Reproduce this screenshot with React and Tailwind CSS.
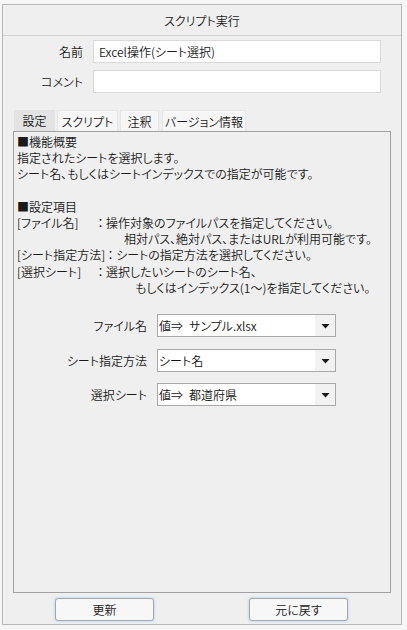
import React from "react";

const font = "font-['Noto_Sans_CJK_JP','Noto_Sans',sans-serif] [font-feature-settings:'palt'] font-[350]";

function Arrow() {
  return (
    <svg width="9" height="6" viewBox="0 0 9 6" className="block">
      <path d="M0.5 1 L8.5 1 L4.5 5.5 Z" fill="#1a1a1a" />
    </svg>
  );
}

function Select({ children, className = "" }) {
  return (
    <div className={"flex h-[23px] w-[179px] border border-[#a9a9a9] bg-white " + className}>
      <div className="flex flex-1 items-center pl-[1px] whitespace-nowrap text-[#111]">{children}</div>
      <div className="flex w-[20px] items-center justify-center bg-[#f2f2f2]">
        <Arrow />
      </div>
    </div>
  );
}

function Row({ label, text, cont }) {
  return (
    <>
      <div className="flex">
        <span className="min-w-[78px] shrink-0 whitespace-nowrap">{label}</span>
        <span className="inline-block w-[11px] shrink-0 text-center">：</span>
        <span className="whitespace-nowrap">{text}</span>
      </div>
      {cont}
    </>
  );
}

export default function App() {
  return (
    <div className={"h-[630px] w-[407px] bg-[#f6f6f6] pl-[2px] pt-[4px] text-[12px] text-[#1a1a1a] " + font}>
      <div className="flex h-[621px] w-[400px] flex-col border border-[#b8b8b8] bg-[#efefef]">
        <div className="flex h-[31px] items-center justify-center border-b border-[#d4d4d4] pt-[2px] text-[12px]">
          スクリプト実行
        </div>

        <div className="mt-[4px] flex items-center">
          <div className="w-[80px] text-right">名前</div>
          <div className="ml-[10px] flex h-[23px] w-[288px] items-center border border-[#d9d9d9] bg-white pl-[5px]">
            Excel操作(シート選択)
          </div>
        </div>
        <div className="mt-[7px] flex items-center">
          <div className="w-[80px] text-right">コメント</div>
          <div className="ml-[10px] h-[23px] w-[288px] border border-[#d9d9d9] bg-white" />
        </div>

        <div className="ml-[11px] mt-[17px] flex h-[21px] items-stretch">
          <div className="flex w-[41px] items-center justify-center bg-[#e3e3e3] pt-[1px]">設定</div>
          <div className="ml-[2px] flex w-[61px] items-center justify-center border border-b-0 border-[#e6e6e6] bg-[#f6f6f6] pt-[1px]">スクリプト</div>
          <div className="ml-[2px] flex w-[39px] items-center justify-center border border-b-0 border-[#e6e6e6] bg-[#f6f6f6] pt-[1px]">注釈</div>
          <div className="ml-[3px] flex w-[84px] items-center justify-center border border-b-0 border-[#e6e6e6] bg-[#f6f6f6] pt-[1px]">バージョン情報</div>
        </div>

        <div className="ml-[10px] h-[462px] w-[378px] border border-[#a0a0a0] bg-[#efefef] pl-[3px] pt-[2px]">
          <div className="leading-[16.2px]">
            <div>■機能概要</div>
            <div>指定されたシートを選択します。</div>
            <div>シート名、もしくはシートインデックスでの指定が可能です。</div>
            <div className="h-[16.2px]" />
            <div>■設定項目</div>
            <Row
              label="[ファイル名]"
              text="操作対象のファイルパスを指定してください。"
              cont={<div className="pl-[107px] whitespace-nowrap">相対パス、絶対パス、またはURLが利用可能です。</div>}
            />
            <Row label="[シート指定方法]" text="シートの指定方法を選択してください。" />
            <Row
              label="[選択シート]"
              text="選択したいシートのシート名、"
              cont={<div className="pl-[118px] whitespace-nowrap">もしくはインデックス(1～)を指定してください。</div>}
            />
          </div>

          <div className="mt-[18px] flex flex-col">
            <div className="flex items-center">
              <div className="w-[130px] text-right">ファイル名</div>
              <Select className="ml-[10px]">値⇒ <span className="ml-[6px]">サンプル.xlsx</span></Select>
            </div>
            <div className="mt-[12px] flex items-center">
              <div className="w-[130px] text-right">シート指定方法</div>
              <Select className="ml-[10px]">シート名</Select>
            </div>
            <div className="mt-[11px] flex items-center">
              <div className="w-[130px] text-right">選択シート</div>
              <Select className="ml-[10px]">値⇒ <span className="ml-[6px]">都道府県</span></Select>
            </div>
          </div>
        </div>

        <div className="mt-[5px] flex">
          <button className="ml-[52px] flex h-[23px] w-[99px] items-center justify-center rounded-[3px] border border-[#a8a8a8] bg-[#f7f7f7] shadow-[0_0_2px_1px_#c9ddf0]">
            更新
          </button>
          <button className="ml-[95px] flex h-[23px] w-[99px] items-center justify-center rounded-[3px] border border-[#a8a8a8] bg-[#f7f7f7] shadow-[0_0_2px_1px_#c9ddf0]">
            元に戻す
          </button>
        </div>
      </div>
    </div>
  );
}
